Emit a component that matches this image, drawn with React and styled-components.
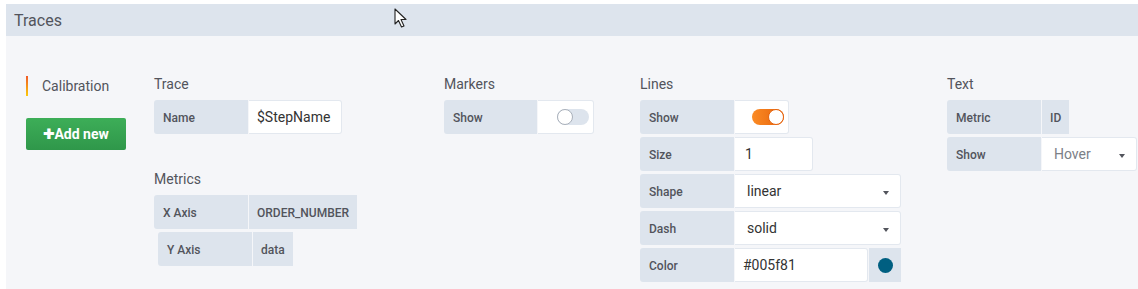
import React from "react";
import styled, { createGlobalStyle } from "styled-components";

const Global = createGlobalStyle`
  body {
    margin: 0;
    background: #ffffff;
    font-family: 'Roboto', 'Liberation Sans', sans-serif;
  }
`;

export default function App() {
  return (
    <>
      <Global />
      <Page>
        <Panel>
          <Header>
            Traces
            <Cursor viewBox="0 0 14 20" width="14" height="20">
              <path d="M1 1 L1 16 L4.5 12.5 L7.5 19 L10 18 L7 11.5 L12 11.5 Z" fill="#fff" stroke="#222" strokeWidth="1.1" strokeLinejoin="round" />
            </Cursor>
          </Header>
          <Body>
            <LeftCol>
              <TabItem>Calibration</TabItem>
              <AddButton><Plus>+</Plus>Add new</AddButton>
            </LeftCol>

            <Column width={290}>
              <Heading>Trace</Heading>
              <Row>
                <Label>Name</Label>
                <Input width={93}>$StepName</Input>
              </Row>
              <Heading top={34}>Metrics</Heading>
              <Row>
                <Label>X Axis</Label>
                <Static>ORDER_NUMBER</Static>
              </Row>
              <Row shift={4}>
                <Label>Y Axis</Label>
                <Static>data</Static>
              </Row>
            </Column>

            <Column width={196}>
              <Heading>Markers</Heading>
              <Row>
                <Label width={93}>Show</Label>
                <ToggleBox width={56}>
                  <Track on={false}><Knob on={false} /></Track>
                </ToggleBox>
              </Row>
            </Column>

            <Column width={307}>
              <Heading>Lines</Heading>
              <Row>
                <Label>Show</Label>
                <ToggleBox width={54}>
                  <Track on={true}><Knob on={true} /></Track>
                </ToggleBox>
              </Row>
              <Row>
                <Label>Size</Label>
                <Input width={78} pad={10}>1</Input>
              </Row>
              <Row>
                <Label>Shape</Label>
                <Select width={166}>linear<Caret /></Select>
              </Row>
              <Row>
                <Label>Dash</Label>
                <Select width={166}>solid<Caret /></Select>
              </Row>
              <Row>
                <Label>Color</Label>
                <Input width={133}>#005f81</Input>
                <Swatch><Dot color="#005f81" /></Swatch>
              </Row>
            </Column>

            <Column>
              <Heading>Text</Heading>
              <Row>
                <Label>Metric</Label>
                <Static>ID</Static>
              </Row>
              <Row>
                <Label>Show</Label>
                <Select width={95} muted>Hover<Caret /></Select>
              </Row>
            </Column>
          </Body>
        </Panel>
      </Page>
    </>
  );
}

const Page = styled.div`
  padding: 4px 0 0 6px;
  height: 289px;
  box-sizing: border-box;
`;

const Panel = styled.div`
  display: flex;
  flex-direction: column;
  height: 100%;
  background: #f5f6f9;
`;

const Header = styled.div`
  position: relative;
  height: 32px;
  display: flex;
  align-items: center;
  padding-left: 8px;
  background: #dde4ed;
  color: #52545c;
  font-size: 16px;
`;

const Cursor = styled.svg`
  position: absolute;
  left: 388px;
  top: 4px;
`;

const Body = styled.div`
  display: flex;
  padding: 40px 0 0 20px;
`;

const LeftCol = styled.div`
  width: 128px;
  display: flex;
  flex-direction: column;
`;

const TabItem = styled.div`
  position: relative;
  height: 20px;
  display: flex;
  align-items: center;
  padding-left: 16px;
  font-size: 14px;
  color: #52545c;
  &::before {
    content: "";
    position: absolute;
    left: 0;
    top: 0;
    width: 2px;
    height: 20px;
    background: linear-gradient(180deg, #f05a28, #fbca0a);
  }
`;

const AddButton = styled.button`
  margin-top: 22px;
  width: 100px;
  height: 32px;
  border: none;
  border-radius: 2px;
  background: linear-gradient(180deg, #3dae58, #2f974a);
  color: #ffffff;
  font-family: 'Roboto', sans-serif;
  font-size: 14px;
  font-weight: 700;
  display: flex;
  align-items: center;
  justify-content: center;
  padding: 0;
`;

const Plus = styled.span`
  font-size: 21px;
  font-weight: 900;
  line-height: 1;
  margin-top: -2px;
`;

const Column = styled.div`
  width: ${(p) => (p.width ? p.width + "px" : "auto")};
  flex-shrink: 0;
  display: flex;
  flex-direction: column;
  gap: 3px;
`;

const Heading = styled.div`
  height: 20px;
  box-sizing: border-box;
  padding-bottom: 4px;
  margin-top: ${(p) => (p.top ? p.top + "px" : "0")};
  margin-bottom: 1px;
  display: flex;
  align-items: center;
  font-size: 14px;
  color: #52545c;
`;

const Row = styled.div`
  display: flex;
  height: 34px;
  margin-left: ${(p) => (p.shift ? p.shift + "px" : "0")};
`;

const Label = styled.div`
  width: ${(p) => p.width || 94}px;
  box-sizing: border-box;
  padding: 1px 0 0 9px;
  margin-right: 1px;
  display: flex;
  align-items: center;
  background: #dde4ed;
  border-radius: 3px 0 0 3px;
  font-size: 12px;
  font-weight: 500;
  color: #52545c;
`;

const Static = styled.div`
  display: flex;
  align-items: center;
  padding: 1px 8px 0;
  background: #dde4ed;
  font-size: 12px;
  font-weight: 500;
  color: #52545c;
`;

const Input = styled.div`
  width: ${(p) => p.width}px;
  box-sizing: border-box;
  display: flex;
  align-items: center;
  padding-left: ${(p) => p.pad || 8}px;
  background: #ffffff;
  border: 1px solid #e3e8ef;
  border-left: none;
  border-radius: 0 3px 3px 0;
  font-size: 14px;
  color: #333333;
`;

const Select = styled(Input)`
  position: relative;
  padding-left: 12px;
  color: ${(p) => (p.muted ? "#7b8087" : "#333333")};
`;

const Caret = styled.span`
  position: absolute;
  right: 11px;
  top: 16px;
  border-left: 3.5px solid transparent;
  border-right: 3.5px solid transparent;
  border-top: 4px solid #52545c;
`;

const ToggleBox = styled.div`
  width: ${(p) => p.width}px;
  box-sizing: border-box;
  display: flex;
  align-items: center;
  justify-content: flex-end;
  padding-right: 4px;
  background: #ffffff;
  border: 1px solid #e3e8ef;
  border-left: none;
  border-radius: 0 3px 3px 0;
`;

const Track = styled.div`
  position: relative;
  width: 32px;
  height: 16px;
  border-radius: 8px;
  background: ${(p) => (p.on ? "linear-gradient(90deg, #fb8b25, #e5620b)" : "#dde4ed")};
`;

const Knob = styled.div`
  position: absolute;
  top: 0;
  left: ${(p) => (p.on ? "16px" : "0")};
  width: 16px;
  height: 16px;
  box-sizing: border-box;
  border-radius: 50%;
  background: #ffffff;
  border: 1.5px solid ${(p) => (p.on ? "#e5620b" : "#a9b0ba")};
`;

const Swatch = styled.div`
  width: 32px;
  margin-left: 1px;
  display: flex;
  align-items: center;
  justify-content: center;
  background: #dde4ed;
`;

const Dot = styled.div`
  width: 15px;
  height: 15px;
  border-radius: 50%;
  background: ${(p) => p.color};
`;
